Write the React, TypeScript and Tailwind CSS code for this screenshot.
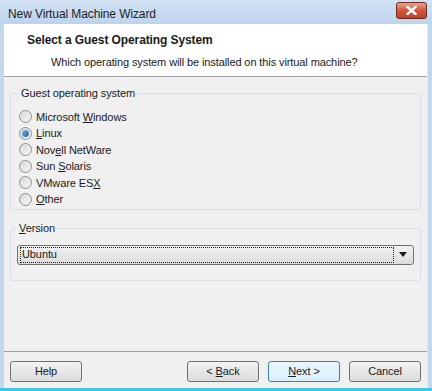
import React, { useState } from 'react';

const font = { fontFamily: '"Liberation Sans", Arial, sans-serif', letterSpacing: '-0.1px' };

const osList = [
  { id: 'win', pre: 'Microsoft ', key: 'W', post: 'indows' },
  { id: 'linux', pre: '', key: 'L', post: 'inux' },
  { id: 'netware', pre: 'Nov', key: 'e', post: 'll NetWare' },
  { id: 'solaris', pre: 'Sun ', key: 'S', post: 'olaris' },
  { id: 'esx', pre: 'VMware ES', key: 'X', post: '' },
  { id: 'other', pre: '', key: 'O', post: 'ther' },
];

function Radio({ checked }: { checked: boolean }) {
  return (
    <span className="w-[13px] h-[13px] rounded-full border border-[#8f8f8f] bg-gradient-to-br from-[#d9d9d9] to-[#f6f6f6] flex items-center justify-center shrink-0">
      {checked && <span className="w-[7px] h-[7px] rounded-full bg-gradient-to-br from-[#7ab6ea] to-[#1c5fa6]" />}
    </span>
  );
}

function WinButton({ children, focused = false }: { children: React.ReactNode; focused?: boolean }) {
  return (
    <button
      className={`w-[72px] h-[21px] rounded-[3px] border text-[11px] text-[#1a1a1a] leading-none flex items-center justify-center bg-gradient-to-b ${
        focused ? 'border-[#3c7fb1] from-[#eaf6fd] to-[#d9f0fc]' : 'border-[#707070] from-[#f2f2f2] to-[#dcdcdc]'
      }`}
    >
      {children}
    </button>
  );
}

export default function App() {
  const [selected, setSelected] = useState('linux');

  return (
    <div className="w-[432px] h-[391px] bg-[#c4d7ed] flex flex-col overflow-hidden text-[#1a1a1a]" style={font}>
      {/* Title bar */}
      <div className="h-[24px] flex items-center justify-between pl-[8px] pr-[5px] bg-gradient-to-b from-[#d3e2f3] to-[#bcd3ec]">
        <span className="text-[12px] text-[#1e1e1e] pt-[3px]">New Virtual Machine Wizard</span>
        <div className="w-[31px] h-[17px] -mt-[3px] rounded-[3px] border border-[#6e2a1e] bg-gradient-to-b from-[#e8a493] via-[#d1563c] to-[#c0412a] flex items-center justify-center">
          <svg width="11" height="9" viewBox="0 0 11 9">
            <path d="M1.5 1 L9.5 8 M9.5 1 L1.5 8" stroke="#fff" strokeWidth="2.4" strokeLinecap="square" />
          </svg>
        </div>
      </div>

      <div className="flex-1 flex flex-col ml-[4px] mr-[4px] border-r border-[#e3ecf6]">
        {/* Header */}
        <div className="h-[53px] bg-white border-b border-[#a0a0a0] pl-[23px] pt-[7px]">
          <div className="text-[12px] font-bold leading-[18px]">Select a Guest Operating System</div>
          <div className="text-[11px] leading-[18px] pl-[24px] mt-[4px]">Which operating system will be installed on this virtual machine?</div>
        </div>

        {/* Body */}
        <div className="flex-1 bg-[#f0f0f0] px-[6px] pt-[8px] flex flex-col">
          <fieldset className="border border-[#d5dfe5] rounded-[3px] pl-[8px] pb-[3px] h-[125px]">
            <legend className="text-[11px] px-[3px] ml-[-1px]">Guest operating system</legend>
            <div className="flex flex-col mt-[7px]">
              {osList.map(os => (
                <label key={os.id} onClick={() => setSelected(os.id)} className="h-[16.5px] flex items-center gap-[4px] text-[11px]">
                  <Radio checked={selected === os.id} />
                  <span>
                    {os.pre}
                    <span className="underline">{os.key}</span>
                    {os.post}
                  </span>
                </label>
              ))}
            </div>
          </fieldset>

          <fieldset className="mt-[10px] border border-[#d5dfe5] rounded-[3px] px-[6px] h-[61px]">
            <legend className="text-[11px] px-[3px] ml-[-1px]">
              <span className="underline">V</span>ersion
            </legend>
            <div className="mt-[8px] h-[20px] rounded-[3px] border border-[#707070] bg-gradient-to-b from-[#f2f2f2] to-[#dcdcdc] flex items-center pl-[2px] pr-[1px]">
              <div className="flex-1 h-[16px] border border-dotted border-[#222] flex items-center text-[11px] pl-[1px]">Ubuntu</div>
              <div className="w-[18px] flex justify-center">
                <svg width="8" height="5" viewBox="0 0 8 5"><path d="M0 0 H8 L4 5 Z" fill="#1a1a1a" /></svg>
              </div>
            </div>
          </fieldset>

          <div className="flex-1" />

          {/* Footer */}
          <div className="-mx-[6px] border-t border-[#a0a0a0] pt-[9px] pb-[6px] px-[6px] flex items-center">
            <WinButton>Help</WinButton>
            <div className="flex-1" />
            <div className="flex gap-[9px]">
              <WinButton>&lt;&nbsp;<span className="underline">B</span>ack</WinButton>
              <WinButton focused><span className="underline">N</span>ext &gt;</WinButton>
              <WinButton>Cancel</WinButton>
            </div>
          </div>
        </div>
      </div>

      {/* bottom frame */}
      <div className="h-[3px] bg-[#3fc6ee]" />
    </div>
  );
}
